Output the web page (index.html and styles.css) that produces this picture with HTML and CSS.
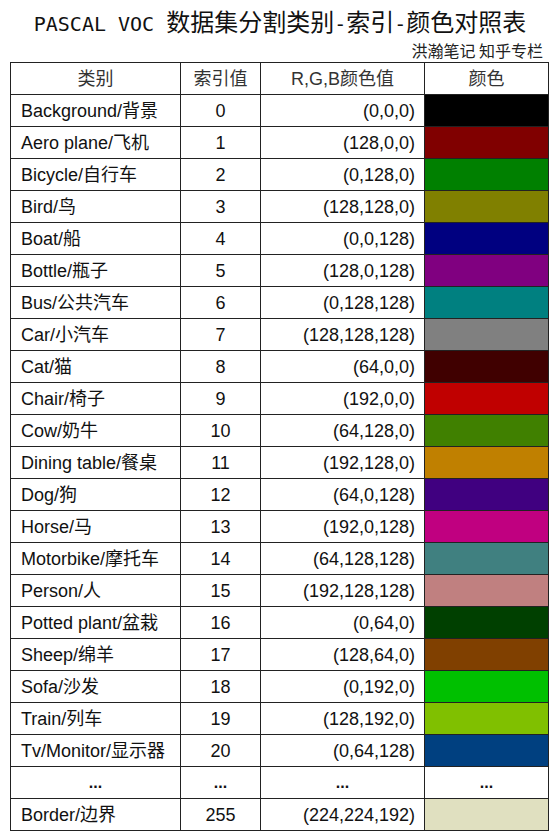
FILE: index.html
```html
<!DOCTYPE html>
<html lang="zh">
<head>
<meta charset="utf-8">
<title>PASCAL VOC 数据集分割类别-索引-颜色对照表</title>
<link rel="stylesheet" href="styles.css">
</head>
<body>
<div class="page">
  <h1 class="title"><span class="latin">PASCAL VOC </span>数据集分割类别<span class="latin">-</span>索引<span class="latin">-</span>颜色对照表</h1>
  <div class="credit">洪瀚笔记 知乎专栏</div>
  <table class="voc">
    <colgroup>
      <col class="c-name"><col class="c-idx"><col class="c-rgb"><col class="c-swatch">
    </colgroup>
    <thead>
      <tr><th>类别</th><th>索引值</th><th>R,G,B颜色值</th><th>颜色</th></tr>
    </thead>
    <tbody>
      <tr><td class="name">Background/背景</td><td class="idx">0</td><td class="rgb">(0,0,0)</td><td class="sw" style="background:rgb(0,0,0)"></td></tr>
      <tr><td class="name">Aero plane/飞机</td><td class="idx">1</td><td class="rgb">(128,0,0)</td><td class="sw" style="background:rgb(128,0,0)"></td></tr>
      <tr><td class="name">Bicycle/自行车</td><td class="idx">2</td><td class="rgb">(0,128,0)</td><td class="sw" style="background:rgb(0,128,0)"></td></tr>
      <tr><td class="name">Bird/鸟</td><td class="idx">3</td><td class="rgb">(128,128,0)</td><td class="sw" style="background:rgb(128,128,0)"></td></tr>
      <tr><td class="name">Boat/船</td><td class="idx">4</td><td class="rgb">(0,0,128)</td><td class="sw" style="background:rgb(0,0,128)"></td></tr>
      <tr><td class="name">Bottle/瓶子</td><td class="idx">5</td><td class="rgb">(128,0,128)</td><td class="sw" style="background:rgb(128,0,128)"></td></tr>
      <tr><td class="name">Bus/公共汽车</td><td class="idx">6</td><td class="rgb">(0,128,128)</td><td class="sw" style="background:rgb(0,128,128)"></td></tr>
      <tr><td class="name">Car/小汽车</td><td class="idx">7</td><td class="rgb">(128,128,128)</td><td class="sw" style="background:rgb(128,128,128)"></td></tr>
      <tr><td class="name">Cat/猫</td><td class="idx">8</td><td class="rgb">(64,0,0)</td><td class="sw" style="background:rgb(64,0,0)"></td></tr>
      <tr><td class="name">Chair/椅子</td><td class="idx">9</td><td class="rgb">(192,0,0)</td><td class="sw" style="background:rgb(192,0,0)"></td></tr>
      <tr><td class="name">Cow/奶牛</td><td class="idx">10</td><td class="rgb">(64,128,0)</td><td class="sw" style="background:rgb(64,128,0)"></td></tr>
      <tr><td class="name">Dining table/餐桌</td><td class="idx">11</td><td class="rgb">(192,128,0)</td><td class="sw" style="background:rgb(192,128,0)"></td></tr>
      <tr><td class="name">Dog/狗</td><td class="idx">12</td><td class="rgb">(64,0,128)</td><td class="sw" style="background:rgb(64,0,128)"></td></tr>
      <tr><td class="name">Horse/马</td><td class="idx">13</td><td class="rgb">(192,0,128)</td><td class="sw" style="background:rgb(192,0,128)"></td></tr>
      <tr><td class="name">Motorbike/摩托车</td><td class="idx">14</td><td class="rgb">(64,128,128)</td><td class="sw" style="background:rgb(64,128,128)"></td></tr>
      <tr><td class="name">Person/人</td><td class="idx">15</td><td class="rgb">(192,128,128)</td><td class="sw" style="background:rgb(192,128,128)"></td></tr>
      <tr><td class="name">Potted plant/盆栽</td><td class="idx">16</td><td class="rgb">(0,64,0)</td><td class="sw" style="background:rgb(0,64,0)"></td></tr>
      <tr><td class="name">Sheep/绵羊</td><td class="idx">17</td><td class="rgb">(128,64,0)</td><td class="sw" style="background:rgb(128,64,0)"></td></tr>
      <tr><td class="name">Sofa/沙发</td><td class="idx">18</td><td class="rgb">(0,192,0)</td><td class="sw" style="background:rgb(0,192,0)"></td></tr>
      <tr><td class="name">Train/列车</td><td class="idx">19</td><td class="rgb">(128,192,0)</td><td class="sw" style="background:rgb(128,192,0)"></td></tr>
      <tr><td class="name">Tv/Monitor/显示器</td><td class="idx">20</td><td class="rgb">(0,64,128)</td><td class="sw" style="background:rgb(0,64,128)"></td></tr>
      <tr class="ellipsis"><td>...</td><td>...</td><td>...</td><td>...</td></tr>
      <tr><td class="name">Border/边界</td><td class="idx">255</td><td class="rgb">(224,224,192)</td><td class="sw" style="background:rgb(224,224,192)"></td></tr>
    </tbody>
  </table>
</div>
</body>
</html>
```

FILE: styles.css
```css
html, body {
  margin: 0;
  padding: 0;
  background: #fff;
}

.page {
  width: 557px;
  padding: 6px 0 0 10px;
  box-sizing: border-box;
}

.title {
  margin: 0;
  width: 540px;
  text-align: center;
  font-family: "Noto Sans CJK SC", sans-serif;
  font-weight: normal;
  font-size: 24px;
  line-height: 30px;
  color: #111;
  white-space: nowrap;
}

.title .latin {
  font-family: "DejaVu Sans Mono", monospace;
  font-size: 20px;
  white-space: pre;
}

.credit {
  width: 533px;
  text-align: right;
  font-family: "Noto Sans CJK SC", sans-serif;
  font-size: 16px;
  line-height: 22px;
  height: 23px;
  color: #222;
  padding-right: 4px;
}

.voc {
  border-collapse: collapse;
  table-layout: fixed;
  width: 538px;
  font-family: "Liberation Sans", "Noto Sans CJK SC", sans-serif;
  font-size: 18px;
  line-height: 20px;
  color: #111;
}

.c-name { width: 170px; }
.c-idx { width: 80px; }
.c-rgb { width: 164px; }
.c-swatch { width: 124px; }

.voc th,
.voc td {
  border: 1px solid #222;
  height: 32px;
  padding: 0 10px;
  box-sizing: border-box;
  white-space: nowrap;
  vertical-align: middle;
}

.voc th {
  font-weight: normal;
  text-align: center;
  color: #333;
  font-size: 18px;
}

.voc td.name {
  text-align: left;
  padding-left: 10px;
}

.voc td.idx {
  text-align: center;
}

.voc td.rgb {
  text-align: right;
  padding-right: 9px;
}

.voc td.sw {
  padding: 0;
}

.voc tr.ellipsis td {
  text-align: center;
  font-weight: bold;
  font-size: 16px;
}
```
